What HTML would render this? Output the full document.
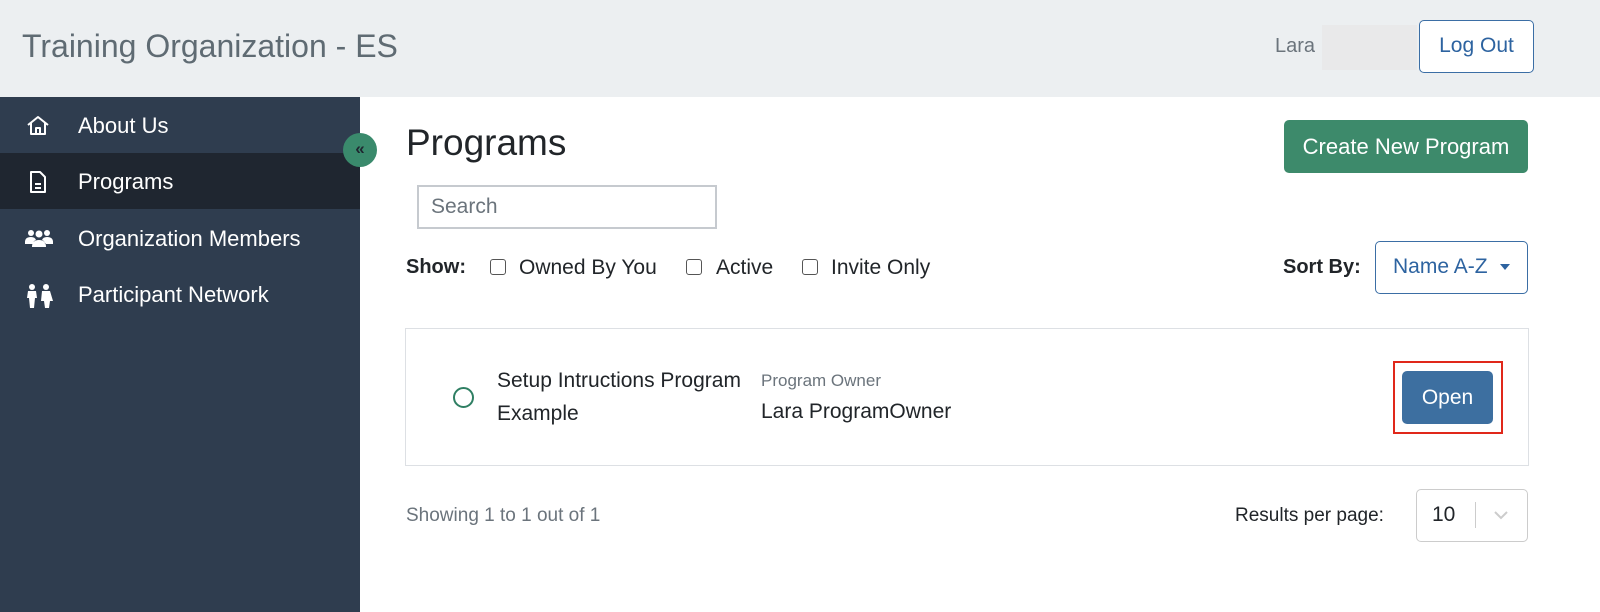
<!DOCTYPE html>
<html><head><meta charset="utf-8"><style>
*{box-sizing:border-box;margin:0;padding:0}
body{width:1600px;height:612px;overflow:hidden;background:#fff;font-family:"Liberation Sans",sans-serif;position:relative;color:#212529}
.a{position:absolute;white-space:nowrap}
</style></head><body>
<div class="a" style="left:0;top:0;width:1600px;height:97px;background:#eceff1"></div>
<div class="a" style="left:22px;top:27px;font-size:32px;color:#5f6b73;line-height:38px">Training Organization - ES</div>
<div class="a" style="left:1275px;top:35px;font-size:20px;color:#6b747c">Lara</div>
<div class="a" style="left:1322px;top:25px;width:95px;height:45px;background:#e9e9ea"></div>
<div class="a" style="left:1419px;top:20px;width:115px;height:53px;border:1.5px solid #3b6ea5;border-radius:5px;background:#fff;color:#2d63a0;font-size:21px;line-height:50px;text-align:center">Log Out</div>

<div class="a" style="left:0;top:97px;width:360px;height:515px;background:#2f3d4f"></div>
<div class="a" style="left:0;top:153px;width:360px;height:56px;background:#1f2630"></div>
<div class="a" style="left:78px;top:113px;font-size:22px;color:#fff">About Us</div>
<div class="a" style="left:78px;top:169px;font-size:22px;color:#fff">Programs</div>
<div class="a" style="left:78px;top:226px;font-size:22px;color:#fff">Organization Members</div>
<div class="a" style="left:78px;top:282px;font-size:22px;color:#fff">Participant Network</div>
<svg class="a" style="left:26px;top:114px" width="24" height="24" viewBox="0 0 24 24" fill="none" stroke="#fff" stroke-width="2" stroke-linejoin="round"><path d="M2 11L12 3l10 8M5 9v11h14V9M10 20v-6h4v6"/></svg>
<svg class="a" style="left:28px;top:170px" width="20" height="24" viewBox="0 0 20 24" fill="none" stroke="#fff" stroke-width="2" stroke-linejoin="round"><path d="M3 2h9l5 5v15H3z"/><path d="M7 14h6M7 18h6"/></svg>
<svg class="a" style="left:24px;top:229px" width="30" height="20" viewBox="0 0 30 20" fill="#fff"><circle cx="7" cy="4" r="3"/><circle cx="23" cy="4" r="3"/><circle cx="15" cy="5" r="3.5"/><path d="M1 13q0-5 6-5 4 0 5 3-3 1-3 4H1zM29 13q0-5-6-5-4 0-5 3 3 1 3 4h8zM8 18q0-7 7-7t7 7z"/></svg>
<svg class="a" style="left:24px;top:283px" width="30" height="26" viewBox="0 0 30 26" fill="#fff"><circle cx="8" cy="4" r="3"/><circle cx="22" cy="4" r="3"/><path d="M4 8h8l1 7h-2l-1 10H6L5 15H3zM18 8h8l3 10h-3l-1 7h-4l-1-7h-3z"/></svg>
<div class="a" style="left:343px;top:133px;width:34px;height:34px;border-radius:50%;background:#3a8a6c;color:#1f2630;font-size:17px;font-weight:bold;text-align:center;line-height:32px">«</div>

<div class="a" style="left:406px;top:122px;font-size:37px;color:#212529">Programs</div>
<div class="a" style="left:1284px;top:120px;width:244px;height:53px;background:#3d8a6b;border-radius:5px;color:#fff;font-size:22px;line-height:53px;text-align:center">Create New Program</div>
<div class="a" style="left:417px;top:185px;width:300px;height:44px;border:2px solid #c6cacf;padding-left:12px;font-size:21px;line-height:40px;color:#6b747c">Search</div>
<div class="a" style="left:406px;top:256px;font-size:20px;font-weight:bold">Show:</div>
<div class="a" style="left:490px;top:259px;width:16px;height:16px;border:1px solid #555;border-radius:3px"></div>
<div class="a" style="left:519px;top:256px;font-size:21px">Owned By You</div>
<div class="a" style="left:686px;top:259px;width:16px;height:16px;border:1px solid #555;border-radius:3px"></div>
<div class="a" style="left:716px;top:256px;font-size:21px">Active</div>
<div class="a" style="left:802px;top:259px;width:16px;height:16px;border:1px solid #555;border-radius:3px"></div>
<div class="a" style="left:831px;top:256px;font-size:21px">Invite Only</div>
<div class="a" style="left:1283px;top:256px;font-size:20px;font-weight:bold">Sort By:</div>
<div class="a" style="left:1375px;top:241px;width:153px;height:53px;border:1.5px solid #3b6ea5;border-radius:5px;color:#2d63a0;font-size:21px;line-height:50px;padding-left:17px">Name A-Z<span style="position:absolute;left:124px;top:22px;border-left:5px solid transparent;border-right:5px solid transparent;border-top:6px solid #2d63a0"></span></div>

<div class="a" style="left:405px;top:328px;width:1124px;height:138px;border:1.5px solid #dde0e4"></div>
<div class="a" style="left:453px;top:387px;width:21px;height:21px;border:2.5px solid #2f7f63;border-radius:50%"></div>
<div class="a" style="left:497px;top:369px;font-size:21px">Setup Intructions Program</div>
<div class="a" style="left:497px;top:402px;font-size:21px">Example</div>
<div class="a" style="left:761px;top:371px;font-size:17px;color:#6b747c">Program Owner</div>
<div class="a" style="left:761px;top:400px;font-size:21px">Lara ProgramOwner</div>
<div class="a" style="left:1393px;top:361px;width:110px;height:73px;border:2.5px solid #e0281a"></div>
<div class="a" style="left:1402px;top:371px;width:91px;height:53px;background:#3d6fa0;border-radius:5px;color:#fff;font-size:21px;line-height:53px;text-align:center">Open</div>

<div class="a" style="left:406px;top:505px;font-size:19px;color:#6b747c">Showing 1 to 1 out of 1</div>
<div class="a" style="left:1235px;top:505px;font-size:19px;color:#212529">Results per page:</div>
<div class="a" style="left:1416px;top:489px;width:112px;height:53px;border:1.5px solid #ccc;border-radius:5px;font-size:21px;line-height:50px;padding-left:15px">10<span style="position:absolute;left:58px;top:12px;width:1px;height:26px;background:#ccc"></span><svg style="position:absolute;left:76px;top:20px" width="16" height="10" viewBox="0 0 16 10" fill="none" stroke="#ccc" stroke-width="2"><path d="M2 2l6 6 6-6"/></svg></div>
</body></html>
